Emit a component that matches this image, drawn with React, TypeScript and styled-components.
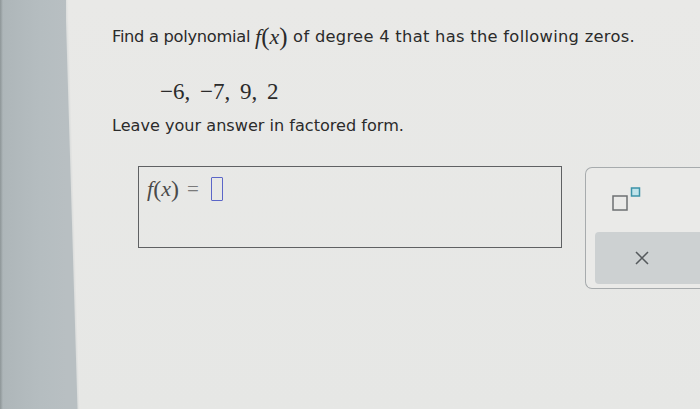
import React from "react";
import styled, { createGlobalStyle } from "styled-components";

const Global = createGlobalStyle`
  html, body { margin: 0; padding: 0; }
  body { width: 700px; height: 409px; overflow: hidden; background: #e7e7e5; }
  #root { height: 409px; }
`;

const Page = styled.div`
  display: flex;
  height: 409px;
  width: 700px;
  background: #e8e8e6;
`;

const Sidebar = styled.div`
  width: 66px;
  flex: none;
  background: linear-gradient(90deg, #8d9597 0px, #aeb6b9 3px, #b5bdc0 40px, #b8bfc2 66px);
`;

const Content = styled.div`
  flex: 1;
  padding: 25px 0 0 46px;
  display: flex;
  flex-direction: column;
  background:
    linear-gradient(88.3deg, #b8bfc2 0px, #b8bfc2 11px, #dcdedd 12px, #e8e8e6 14px, rgba(232,232,230,0) 15px),
    linear-gradient(180deg, #e9e9e7 0%, #e6e7e5 100%);
`;

const Prompt = styled.div<{ $size?: number }>`
  margin: 0;
  height: 24px;
  display: flex;
  align-items: center;
  white-space: pre;
  font-family: "DejaVu Sans", Verdana, sans-serif;
  font-size: ${(p) => p.$size ?? 16.1}px;
  color: #2b2b2b;
  line-height: 24px;
`;

const Words = styled.span<{ $track: number }>`
  letter-spacing: ${(p) => p.$track}px;
`;

const MathI = styled.span<{ $size?: number }>`
  font-family: "Liberation Serif", "Times New Roman", serif;
  font-style: italic;
  font-size: ${(p) => p.$size ?? 22}px;
`;

const Paren = styled.span<{ $size?: number }>`
  font-family: "Liberation Serif", serif;
  font-style: normal;
  font-size: ${(p) => p.$size ?? 25}px;
`;

const Zeros = styled.div`
  margin: 31px 0 0 48px;
  height: 24px;
  font-family: "Liberation Serif", "Times New Roman", serif;
  font-size: 23px;
  color: #2b2b2b;
  word-spacing: 4px;
  line-height: 24px;
`;

const Leave = styled(Prompt)`
  margin-top: 10px;
`;

const Row = styled.div`
  display: flex;
  align-items: flex-start;
  margin-top: 28px;
  margin-left: 26px;
`;

const AnswerBox = styled.div`
  width: 424px;
  height: 82px;
  border: 1.5px solid #5f6163;
  box-sizing: border-box;
  padding: 9px 0 0 8px;
  display: flex;
  align-items: flex-start;
  font-family: "Liberation Serif", serif;
  color: #4a4a4a;
`;

const Expr = styled.div`
  display: flex;
  align-items: center;
  height: 26px;
`;

const Eq = styled.span`
  font-size: 21px;
  color: #7a7a7a;
  margin: 0 12px 0 8px;
`;

const Slot = styled.span`
  display: inline-block;
  width: 10px;
  height: 22px;
  border: 1.5px solid #5b66c8;
  border-radius: 1px;
`;

const Panel = styled.div`
  margin-left: 23px;
  margin-top: 1px;
  width: 130px;
  height: 122px;
  border: 1.5px solid #a7abad;
  border-right: none;
  border-radius: 7px 0 0 7px;
  box-sizing: border-box;
  padding: 0 0 4px 9px;
  display: flex;
  flex-direction: column;
  background: #eaeae8;
`;

const IconArea = styled.div`
  height: 64px;
  display: flex;
  align-items: center;
  padding-left: 17px;
`;

const ClearButton = styled.div`
  flex: 1;
  background: #cdd1d2;
  border-radius: 4px 0 0 4px;
  display: flex;
  align-items: center;
  padding-left: 39px;
`;

export default function App() {
  return (
    <>
      <Global />
      <Page>
        <Sidebar />
        <Content>
          <Prompt $size={16.3}>
            <Words $track={-0.3}>{"Find a polynomial "}</Words>
            <MathI>f</MathI>
            <Paren>(</Paren>
            <MathI>x</MathI>
            <Paren>)</Paren>
            <Words $track={0.3}>{" of degree 4 that has the following zeros."}</Words>
          </Prompt>
          <Zeros>−6, −7, 9, 2</Zeros>
          <Leave>Leave your answer in factored form.</Leave>
          <Row>
            <AnswerBox>
              <Expr>
                <MathI $size={22}>f</MathI>
                <Paren $size={24}>(</Paren>
                <MathI $size={22}>x</MathI>
                <Paren $size={24}>)</Paren>
                <Eq>=</Eq>
                <Slot />
              </Expr>
            </AnswerBox>
            <Panel>
              <IconArea>
                <svg width="30" height="26" viewBox="0 0 30 26">
                  <rect x="1" y="9" width="14" height="14" fill="none" stroke="#6d7072" strokeWidth="1.5" />
                  <rect x="19.5" y="1" width="8" height="8" fill="#bfe3ea" stroke="#3c93a8" strokeWidth="1.5" />
                </svg>
              </IconArea>
              <ClearButton>
                <svg width="16" height="16" viewBox="0 0 16 16">
                  <path d="M2 2 L14 14 M14 2 L2 14" stroke="#555a5d" strokeWidth="1.5" fill="none" />
                </svg>
              </ClearButton>
            </Panel>
          </Row>
        </Content>
      </Page>
    </>
  );
}
